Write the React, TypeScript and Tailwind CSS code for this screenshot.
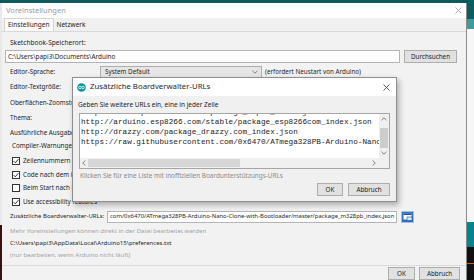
import React from "react";

function CheckBox({ checked }: { checked: boolean }) {
  return (
    <span className="flex items-center justify-center w-[8px] h-[8px] border border-[#333] bg-white mr-[3px]">
      {checked && (
        <svg width="6" height="6" viewBox="0 0 6 6">
          <path d="M0.6 3.1 L2.3 4.8 L5.4 1.2" fill="none" stroke="#222" strokeWidth="0.9" />
        </svg>
      )}
    </span>
  );
}

function WinButton({ label, w }: { label: string; w: string }) {
  return (
    <div className={`${w} h-[13px] flex items-center justify-center bg-[#e1e1e1] border border-[#adadad] text-[6.3px] text-[#222]`}>
      {label}
    </div>
  );
}

function CloseX({ color }: { color: string }) {
  return (
    <svg width="7" height="7" viewBox="0 0 7 7">
      <path d="M0.5 0.5 L6.5 6.5 M6.5 0.5 L0.5 6.5" stroke={color} strokeWidth="0.8" />
    </svg>
  );
}

function ArduinoIcon() {
  return (
    <svg width="9" height="9" viewBox="0 0 9 9">
      <circle cx="4.5" cy="4.5" r="4.3" fill="#00979c" />
      <circle cx="3" cy="4.5" r="1.3" fill="none" stroke="#fff" strokeWidth="0.8" />
      <circle cx="6" cy="4.5" r="1.3" fill="none" stroke="#fff" strokeWidth="0.8" />
    </svg>
  );
}

function WindowIcon() {
  return (
    <svg width="13" height="12" viewBox="0 0 13 12">
      <rect x="0.5" y="0.5" width="12" height="11" fill="#2f6fc4" stroke="#9cc1ea" />
      <rect x="2.5" y="2.5" width="8" height="6" fill="#fff" />
      <rect x="2.5" y="2.5" width="8" height="1.5" fill="#1d4f94" />
      <rect x="6" y="6" width="5" height="3.5" fill="#dce9f8" stroke="#1d4f94" strokeWidth="0.6" />
    </svg>
  );
}

const label = "text-[6.3px] text-[#1e1e1e] whitespace-nowrap";

export default function App() {
  const row = (h: string, text: string) => (
    <div className={`${h} flex items-center pl-[8px] ${label}`}>{text}</div>
  );
  const check = (h: string, text: string, on: boolean) => (
    <div className={`${h} flex items-center pl-[10px] ${label}`}>
      <CheckBox checked={on} />
      {text}
    </div>
  );

  return (
    <div className="relative flex w-[474px] h-[280px] overflow-hidden bg-[#f0f0f0] font-['Noto_Sans',sans-serif]">
      {/* left desktop edge */}
      <div className="w-[2px] flex flex-col">
        <div className="h-[3px] bg-[#0b5a5c]" />
        <div className="flex-1 bg-[#e9e9e9]" />
        <div className="h-[55px] bg-[#3a0f0f]" />
      </div>

      {/* main window */}
      <div className="w-[465px] flex flex-col">
        <div className="h-[3px] bg-[#0b5a5c]" />
        <div className="flex-1 flex flex-col border-r border-[#8a8a8a]">
          <div className="h-[15px] bg-white flex items-center justify-between pl-[4px] pr-[4px]">
            <span className="text-[7.5px] text-[#9a9a9a]">Voreinstellungen</span>
            <CloseX color="#9a9a9a" />
          </div>
          <div className="h-[14px] bg-[#f0f0f0] flex items-end pl-[2px] border-b border-[#d9d9d9]">
            <div className="h-[13px] px-[3px] flex items-center bg-[#fbfbfb] border border-b-0 border-[#d4d4d4] text-[6.5px] text-[#1e1e1e]">
              Einstellungen
            </div>
            <div className="h-[12px] px-[3px] flex items-center text-[6.5px] text-[#1e1e1e]">Netzwerk</div>
          </div>

          <div className="flex-1 flex flex-col bg-[#f2f2f2]">
            <div className="h-[18px] pt-[4px] flex items-center pl-[8px]">
              <span className="text-[6.6px] text-[#1e1e1e] whitespace-nowrap">Sketchbook-Speicherort:</span>
            </div>
            <div className="h-[13px] flex items-center pl-[3px]">
              <div className="w-[395px] h-[13px] bg-white border border-[#b4b4b4] flex items-center pl-[2px] text-[6.4px] text-[#1e1e1e]">
                C:\Users\papi3\Documents\Arduino
              </div>
              <div className="ml-[4px]">
                <WinButton label="Durchsuchen" w="w-[53px]" />
              </div>
            </div>
            <div className="mt-[3px] h-[12px] flex items-center pl-[8px]">
              <span className={`${label} w-[90px]`}>Editor-Sprache:</span>
              <div className="w-[162px] h-[12px] bg-[#e6e6e6] border border-[#adadad] flex items-center justify-between pl-[4px] pr-[3px] text-[6.3px] text-[#1e1e1e]">
                System Default
                <svg width="6" height="4" viewBox="0 0 6 4">
                  <path d="M0.5 0.8 L3 3.2 L5.5 0.8" fill="none" stroke="#555" strokeWidth="0.7" />
                </svg>
              </div>
              <span className={`${label} ml-[3px]`}>(erfordert Neustart von Arduino)</span>
            </div>
            {row("h-[18px]", "Editor-Textgröße:")}
            {row("h-[14px]", "Oberflächen-Zoomstufe:")}
            {row("h-[16px]", "Thema:")}
            {row("h-[13px]", "Ausführliche Ausgabe während:")}
            <div className={`h-[14px] flex items-center pl-[10px] ${label}`}>Compiler-Warnungen:</div>
            {check("h-[15px]", "Zeilennummern anzeigen", true)}
            {check("h-[13px]", "Code nach dem Hochladen überprüfen", true)}
            {check("h-[14px]", "Beim Start nach Updates suchen", false)}
            {check("h-[13px]", "Use accessibility features", true)}
            <div className="h-[17px] flex items-center pl-[8px]">
              <span className="text-[6px] text-[#1e1e1e] whitespace-nowrap w-[97px]">Zusätzliche Boardverwalter-URLs:</span>
              <div className="w-[290px] h-[12px] bg-white border border-[#b4b4b4] flex items-center pl-[2px] overflow-hidden text-[5.9px] text-[#1e1e1e] whitespace-nowrap">
                com/0x6470/ATmega328PB-Arduino-Nano-Clone-with-Bootloader/master/package_m328pb_index.json
              </div>
              <div className="ml-[4px]">
                <WindowIcon />
              </div>
            </div>
            <div className="h-[12px] flex items-center pl-[8px] text-[6.1px] text-[#a3a3a3] whitespace-nowrap">
              Mehr Voreinstellungen können direkt in der Datei bearbeitet werden
            </div>
            <div className="h-[12px] flex items-center pl-[8px] text-[6px] text-[#1e1e1e] whitespace-nowrap">
              C:\Users\papi3\AppData\Local\Arduino15\preferences.txt
            </div>
            <div className="h-[11px] flex items-center pl-[8px] text-[6.1px] text-[#a3a3a3] whitespace-nowrap">
              (nur bearbeiten, wenn Arduino nicht läuft)
            </div>
            <div className="flex-1" />
            <div className="h-[15px] border-t border-[#dcdcdc] flex items-start justify-end gap-[4px] pt-[1px] pr-[6px]">
              <WinButton label="OK" w="w-[27px]" />
              <WinButton label="Abbruch" w="w-[41px]" />
            </div>
          </div>
        </div>
      </div>

      {/* right desktop edge */}
      <div className="flex-1 flex flex-col">
        <div className="h-[19px] bg-[#075f62]" />
        <div className="h-[10px] bg-[#3b9c9e]" />
        <div className="flex-1 bg-[#f6f6f6]" />
        <div className="h-[25px] bg-[#00878b]" />
        <div className="h-[16px] bg-[#111]" />
        <div className="h-[1px] bg-[#c2651f]" />
        <div className="h-[16px] bg-[#111]" />
      </div>

      {/* overlay dialog */}
      <div className="absolute left-[72px] top-[77px] w-[325px] h-[125px] flex flex-col border border-[#8e8e8e] shadow-[2px_3px_6px_rgba(0,0,0,0.3)] bg-[#f0f0f0]">
        <div className="h-[18px] bg-white flex items-center justify-between pl-[4px] pr-[6px]">
          <div className="flex items-center gap-[4px]">
            <ArduinoIcon />
            <span className="text-[7.8px] text-[#1e1e1e]">Zusätzliche Boardverwalter-URLs</span>
          </div>
          <CloseX color="#333" />
        </div>
        <div className="h-[17px] flex items-center pl-[5px] text-[6.5px] text-[#1e1e1e]">
          Geben Sie weitere URLs ein, eine in jeder Zeile
        </div>
        <div className="ml-[6px] w-[311px] h-[56px] border border-[#a5a5a5] bg-white flex flex-col">
          <div className="flex-1 flex overflow-hidden">
            <div className="flex-1 overflow-hidden pl-[1px] font-['Liberation_Mono',monospace] text-[7.7px] leading-[10px] text-[#222] whitespace-nowrap">
              <div className="mt-[-7px]">
                <div>https://dl.espressif.com/dl/package_esp32_index.json</div>
                <div>http://arduino.esp8266.com/stable/package_esp8266com_index.json</div>
                <div>http://drazzy.com/package_drazzy.com_index.json</div>
                <div>https://raw.githubusercontent.com/0x6470/ATmega328PB-Arduino-Nano-Clone-with-Bootloader/master/package_m328pb_index.json</div>
              </div>
            </div>
            <div className="w-[10px] bg-[#f0f0f0] flex flex-col">
              <div className="h-[10px] flex items-center justify-center">
                <svg width="6" height="4" viewBox="0 0 6 4">
                  <path d="M0.5 3.2 L3 0.8 L5.5 3.2" fill="none" stroke="#606060" strokeWidth="0.8" />
                </svg>
              </div>
              <div className="flex-1 pt-[4px] px-[1px]">
                <div className="h-[20px] bg-[#cdcdcd]" />
              </div>
              <div className="h-[10px] flex items-center justify-center">
                <svg width="6" height="4" viewBox="0 0 6 4">
                  <path d="M0.5 0.8 L3 3.2 L5.5 0.8" fill="none" stroke="#606060" strokeWidth="0.8" />
                </svg>
              </div>
            </div>
          </div>
          <div className="h-[10px] flex bg-[#f0f0f0]">
            <div className="w-[7px] flex items-center justify-center">
              <svg width="4" height="6" viewBox="0 0 4 6">
                <path d="M3.2 0.5 L0.8 3 L3.2 5.5" fill="none" stroke="#606060" strokeWidth="0.8" />
              </svg>
            </div>
            <div className="flex-1 flex items-center py-[1px] pl-[1px]">
              <div className="w-[152px] h-full bg-[#d6d6d6]" />
            </div>
            <div className="w-[10px] flex items-center justify-center">
              <svg width="4" height="6" viewBox="0 0 4 6">
                <path d="M0.8 0.5 L3.2 3 L0.8 5.5" fill="none" stroke="#606060" strokeWidth="0.8" />
              </svg>
            </div>
            <div className="w-[10px] bg-[#f0f0f0]" />
          </div>
        </div>
        <div className="h-[14px] flex items-center pl-[7px] text-[6.4px] text-[#8a8a8a] whitespace-nowrap">
          Klicken Sie für eine Liste mit inoffiziellen Boardunterstützungs-URLs
        </div>
        <div className="flex justify-end gap-[5px] pr-[6px]">
          <WinButton label="OK" w="w-[26px]" />
          <WinButton label="Abbruch" w="w-[42px]" />
        </div>
      </div>
    </div>
  );
}
